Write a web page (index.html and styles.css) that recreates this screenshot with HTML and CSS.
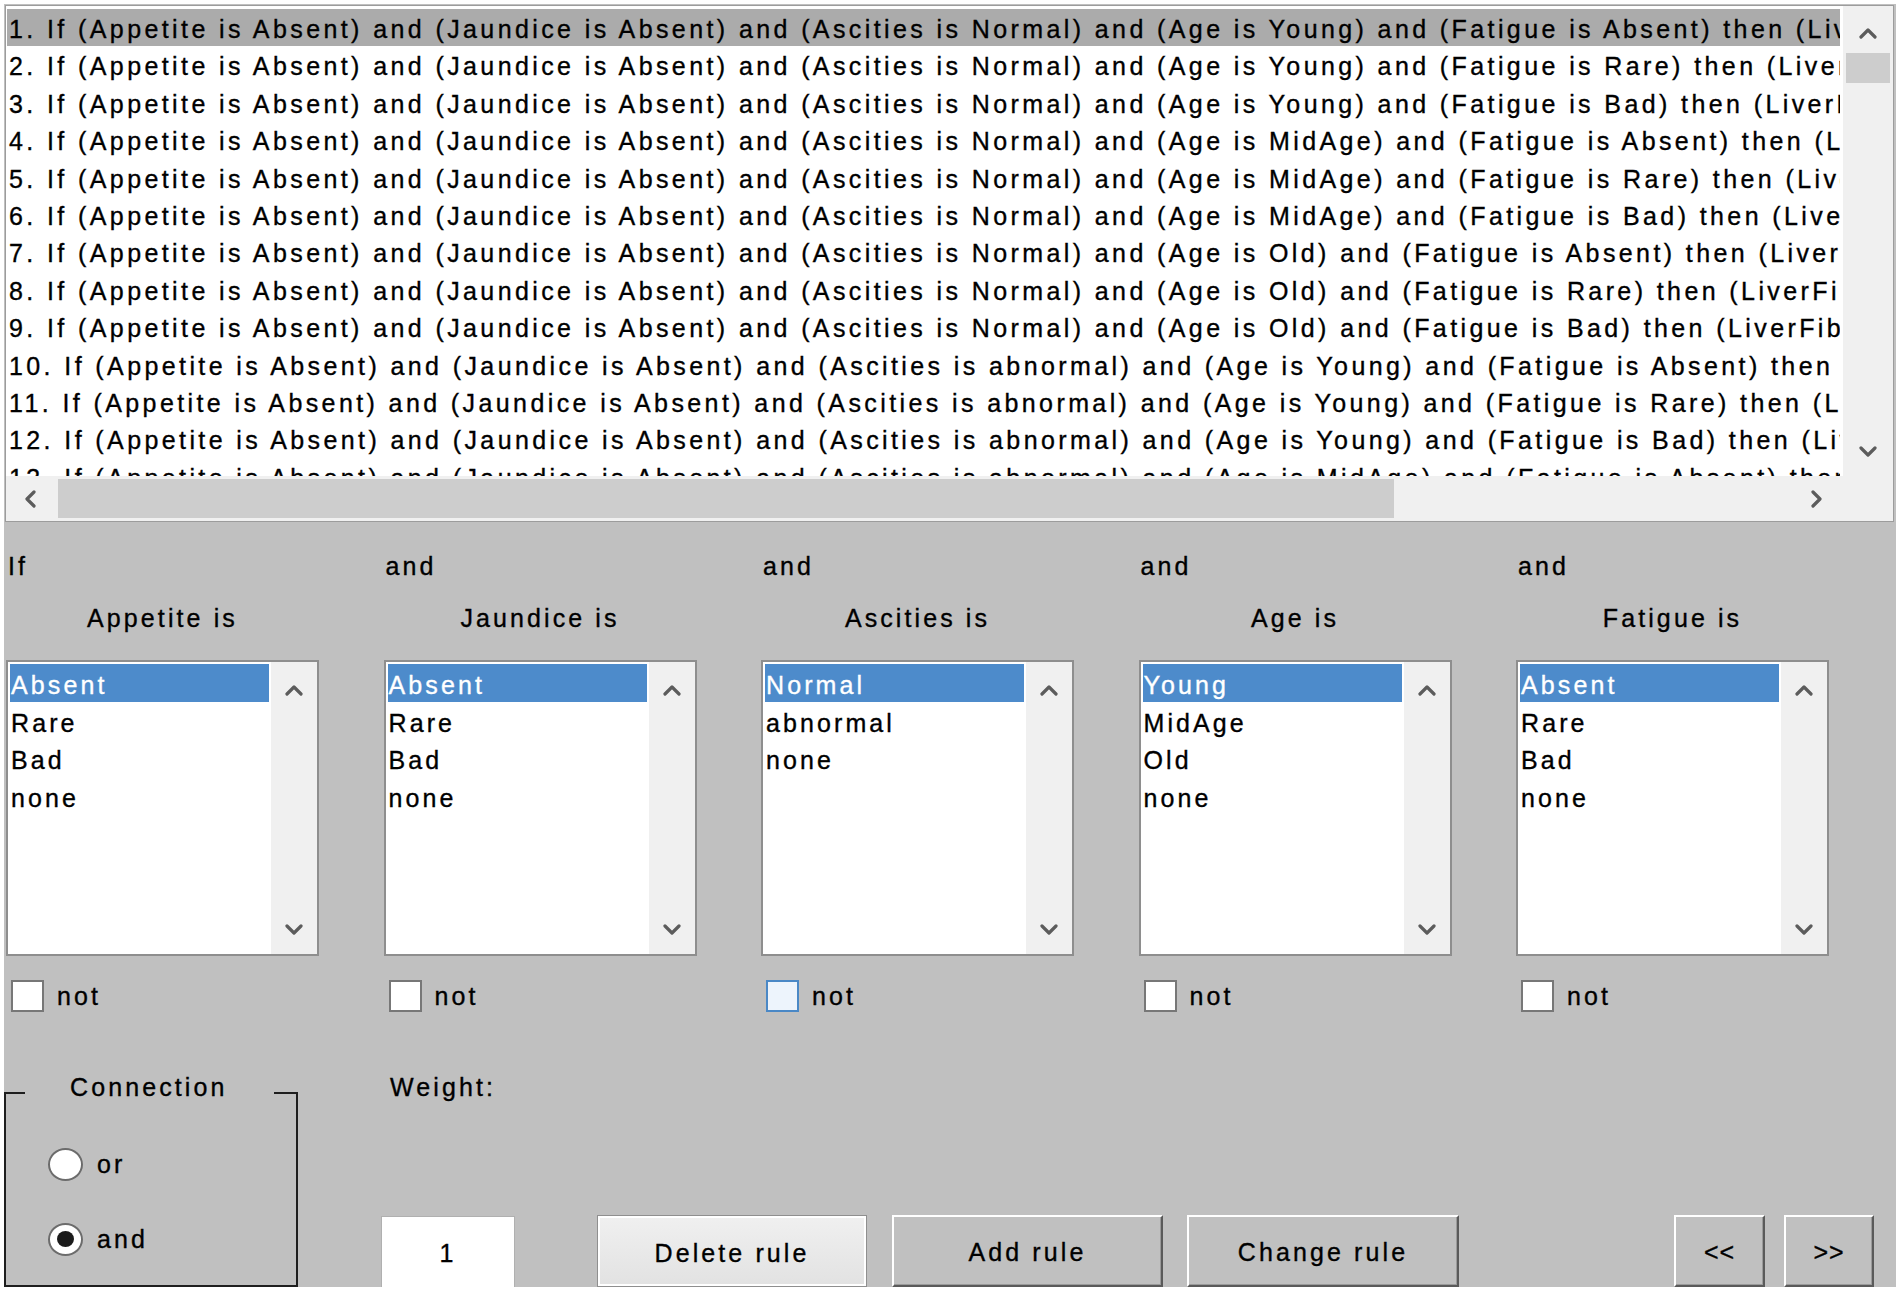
FILE: index.html
```html
<!DOCTYPE html>
<html>
<head>
<meta charset="utf-8">
<title>Rule Editor</title>
<link rel="stylesheet" href="styles.css">
</head>
<body>
<div class="window">
  <div class="rules">
    <div class="rules-body">
      <div class="rule sel">1. If (Appetite is Absent) and (Jaundice is Absent) and (Ascities is Normal) and (Age is Young) and (Fatigue is Absent) then (LiverFibrosis is F0) (1)</div>
      <div class="rule">2. If (Appetite is Absent) and (Jaundice is Absent) and (Ascities is Normal) and (Age is Young) and (Fatigue is Rare) then (LiverFibrosis is F0) (1)</div>
      <div class="rule">3. If (Appetite is Absent) and (Jaundice is Absent) and (Ascities is Normal) and (Age is Young) and (Fatigue is Bad) then (LiverFibrosis is F1) (1)</div>
      <div class="rule">4. If (Appetite is Absent) and (Jaundice is Absent) and (Ascities is Normal) and (Age is MidAge) and (Fatigue is Absent) then (LiverFibrosis is F0) (1)</div>
      <div class="rule">5. If (Appetite is Absent) and (Jaundice is Absent) and (Ascities is Normal) and (Age is MidAge) and (Fatigue is Rare) then (LiverFibrosis is F1) (1)</div>
      <div class="rule">6. If (Appetite is Absent) and (Jaundice is Absent) and (Ascities is Normal) and (Age is MidAge) and (Fatigue is Bad) then (LiverFibrosis is F1) (1)</div>
      <div class="rule">7. If (Appetite is Absent) and (Jaundice is Absent) and (Ascities is Normal) and (Age is Old) and (Fatigue is Absent) then (LiverFibrosis is F1) (1)</div>
      <div class="rule">8. If (Appetite is Absent) and (Jaundice is Absent) and (Ascities is Normal) and (Age is Old) and (Fatigue is Rare) then (LiverFibrosis is F1) (1)</div>
      <div class="rule">9. If (Appetite is Absent) and (Jaundice is Absent) and (Ascities is Normal) and (Age is Old) and (Fatigue is Bad) then (LiverFibrosis is F2) (1)</div>
      <div class="rule">10. If (Appetite is Absent) and (Jaundice is Absent) and (Ascities is abnormal) and (Age is Young) and (Fatigue is Absent) then (LiverFibrosis is F1) (1)</div>
      <div class="rule">11. If (Appetite is Absent) and (Jaundice is Absent) and (Ascities is abnormal) and (Age is Young) and (Fatigue is Rare) then (LiverFibrosis is F1) (1)</div>
      <div class="rule">12. If (Appetite is Absent) and (Jaundice is Absent) and (Ascities is abnormal) and (Age is Young) and (Fatigue is Bad) then (LiverFibrosis is F2) (1)</div>
      <div class="rule">13. If (Appetite is Absent) and (Jaundice is Absent) and (Ascities is abnormal) and (Age is MidAge) and (Fatigue is Absent) then (LiverFibrosis is F1) (1)</div>
    </div>
    <div class="vscroll">
      <svg class="arr arr-up" viewBox="0 0 18 12" width="18" height="12"><polyline points="2,10 9,3 16,10" /></svg>
      <div class="vthumb"></div>
      <svg class="arr arr-down" viewBox="0 0 18 12" width="18" height="12"><polyline points="2,2 9,9 16,2" /></svg>
    </div>
    <div class="hscroll">
      <svg class="arr arr-left" viewBox="0 0 12 18" width="12" height="18"><polyline points="10,2 3,9 10,16" /></svg>
      <div class="hthumb"></div>
      <svg class="arr arr-right" viewBox="0 0 12 18" width="12" height="18"><polyline points="2,2 9,9 2,16" /></svg>
    </div>
    <div class="corner"></div>
  </div>

  <div class="antecedents">
    <div class="col">
      <div class="conn">If</div>
      <div class="var">Appetite is</div>
      <div class="listbox">
        <div class="items">
          <div class="item sel">Absent</div>
          <div class="item">Rare</div>
          <div class="item">Bad</div>
          <div class="item">none</div>
        </div>
        <div class="lscroll">
          <svg class="arr arr-up" viewBox="0 0 18 12" width="18" height="12"><polyline points="2,10 9,3 16,10" /></svg>
          <svg class="arr arr-down" viewBox="0 0 18 12" width="18" height="12"><polyline points="2,2 9,9 16,2" /></svg>
        </div>
      </div>
      <div class="check"><span class="box"></span><span class="check-label">not</span></div>
    </div>

    <div class="col">
      <div class="conn">and</div>
      <div class="var">Jaundice is</div>
      <div class="listbox">
        <div class="items">
          <div class="item sel">Absent</div>
          <div class="item">Rare</div>
          <div class="item">Bad</div>
          <div class="item">none</div>
        </div>
        <div class="lscroll">
          <svg class="arr arr-up" viewBox="0 0 18 12" width="18" height="12"><polyline points="2,10 9,3 16,10" /></svg>
          <svg class="arr arr-down" viewBox="0 0 18 12" width="18" height="12"><polyline points="2,2 9,9 16,2" /></svg>
        </div>
      </div>
      <div class="check"><span class="box"></span><span class="check-label">not</span></div>
    </div>

    <div class="col">
      <div class="conn">and</div>
      <div class="var">Ascities is</div>
      <div class="listbox">
        <div class="items">
          <div class="item sel">Normal</div>
          <div class="item">abnormal</div>
          <div class="item">none</div>
        </div>
        <div class="lscroll">
          <svg class="arr arr-up" viewBox="0 0 18 12" width="18" height="12"><polyline points="2,10 9,3 16,10" /></svg>
          <svg class="arr arr-down" viewBox="0 0 18 12" width="18" height="12"><polyline points="2,2 9,9 16,2" /></svg>
        </div>
      </div>
      <div class="check"><span class="box box-focus"></span><span class="check-label">not</span></div>
    </div>

    <div class="col">
      <div class="conn">and</div>
      <div class="var">Age is</div>
      <div class="listbox">
        <div class="items">
          <div class="item sel">Young</div>
          <div class="item">MidAge</div>
          <div class="item">Old</div>
          <div class="item">none</div>
        </div>
        <div class="lscroll">
          <svg class="arr arr-up" viewBox="0 0 18 12" width="18" height="12"><polyline points="2,10 9,3 16,10" /></svg>
          <svg class="arr arr-down" viewBox="0 0 18 12" width="18" height="12"><polyline points="2,2 9,9 16,2" /></svg>
        </div>
      </div>
      <div class="check"><span class="box"></span><span class="check-label">not</span></div>
    </div>

    <div class="col">
      <div class="conn">and</div>
      <div class="var">Fatigue is</div>
      <div class="listbox">
        <div class="items">
          <div class="item sel">Absent</div>
          <div class="item">Rare</div>
          <div class="item">Bad</div>
          <div class="item">none</div>
        </div>
        <div class="lscroll">
          <svg class="arr arr-up" viewBox="0 0 18 12" width="18" height="12"><polyline points="2,10 9,3 16,10" /></svg>
          <svg class="arr arr-down" viewBox="0 0 18 12" width="18" height="12"><polyline points="2,2 9,9 16,2" /></svg>
        </div>
      </div>
      <div class="check"><span class="box"></span><span class="check-label">not</span></div>
    </div>
  </div>

  <div class="bottom">
    <fieldset class="group">
      <legend>Connection</legend>
      <div class="radio-row first"><span class="radio"></span><span>or</span></div>
      <div class="radio-row"><span class="radio radio-on"></span><span>and</span></div>
    </fieldset>
    <div class="actions">
      <div class="weight-label">Weight:</div>
      <div class="button-row">
        <div class="edit">1</div>
        <div class="btn btn-focus btn-delete">Delete rule</div>
        <div class="btn btn-add">Add rule</div>
        <div class="btn btn-change">Change rule</div>
        <div class="btn btn-prev">&lt;&lt;</div>
        <div class="btn btn-next">&gt;&gt;</div>
      </div>
    </div>
  </div>
</div>
</body>
</html>
```

FILE: styles.css
```css
html, body {
  margin: 0;
  padding: 0;
  background: #ffffff;
}

body {
  font-family: "Liberation Sans", Arial, sans-serif;
  font-size: 25px;
  letter-spacing: 3.1px;
  color: #000;
  -webkit-text-stroke: 0.35px currentColor;
}

.window {
  width: 1892px;
  height: 1283px;
  margin: 4px 0 0 4px;
  background: #c0c0c0;
  display: flex;
  flex-direction: column;
  box-sizing: border-box;
}

/* ---------- rules list ---------- */
.rules {
  margin: 1px 0 0 1px;
  width: 1889px;
  height: 517px;
  box-sizing: border-box;
  border: 1px solid #9c9c9c;
  background: #fff;
  display: grid;
  grid-template-columns: 1fr 50px;
  grid-template-rows: 1fr 45px;
  flex: none;
}

.rules-body {
  overflow: hidden;
  padding-top: 3px;
  min-width: 0;
}

.rule {
  white-space: nowrap;
  overflow: hidden;
  box-sizing: border-box;
  height: 37.4px;
  padding-top: 4px;
  line-height: 33.4px;
  margin: 0 3px 0 1px;
  padding-left: 2px;
  letter-spacing: 3.4px;
}

.rule.sel {
  background: #ababab;
}

.arr polyline {
  fill: none;
  stroke: #5c5c5c;
  stroke-width: 3.2;
  stroke-linecap: round;
  stroke-linejoin: round;
}

.vscroll {
  background: #f0f0f0;
  display: flex;
  flex-direction: column;
  align-items: center;
}

.vscroll .arr-up {
  margin-top: 21px;
  flex: none;
}

.vthumb {
  margin-top: 14px;
  width: 44px;
  height: 30px;
  background: #cdcdcd;
  flex: none;
}

.vscroll .arr-down {
  margin-top: auto;
  margin-bottom: 18px;
  flex: none;
}

.hscroll {
  background: #f0f0f0;
  display: flex;
  align-items: center;
}

.hscroll .arr-left {
  margin-left: 18px;
  flex: none;
}

.hthumb {
  margin-left: 22px;
  width: 1336px;
  align-self: stretch;
  margin-top: 3px;
  margin-bottom: 3px;
  background: #cdcdcd;
  flex: none;
}

.hscroll .arr-right {
  margin-left: auto;
  margin-right: 20px;
  flex: none;
}

.corner {
  background: #f0f0f0;
}

/* ---------- antecedent columns ---------- */
.antecedents {
  display: grid;
  grid-template-columns: repeat(5, 313px);
  column-gap: 64.5px;
  margin: 29px 0 0 2px;
  flex: none;
}

.col {
  display: flex;
  flex-direction: column;
}

.conn {
  line-height: 30px;
  height: 30px;
  padding-left: 2px;
}

.var {
  margin-top: 22px;
  line-height: 30px;
  height: 30px;
  text-align: center;
}

.listbox {
  margin-top: 27px;
  height: 296px;
  box-sizing: border-box;
  border: 2px solid #8e8e8e;
  background: #fff;
  display: grid;
  grid-template-columns: 1fr 46px;
}

.items {
  padding: 2px 2px 0 2px;
  min-width: 0;
}

.item {
  box-sizing: border-box;
  height: 37.5px;
  padding-top: 5px;
  line-height: 32.5px;
  padding-left: 1px;
  white-space: nowrap;
}

.item.sel {
  background: #4d8bcb;
  color: #fff;
}

.lscroll {
  background: #f0f0f0;
  display: flex;
  flex-direction: column;
  align-items: center;
}

.lscroll .arr-up {
  margin-top: 22px;
}

.lscroll .arr-down {
  margin-top: auto;
  margin-bottom: 18px;
}

.check {
  margin-top: 24px;
  height: 32px;
  display: flex;
  align-items: center;
}

.box {
  margin-left: 5px;
  width: 33px;
  height: 32px;
  box-sizing: border-box;
  border: 2px solid #777;
  background: #fff;
  flex: none;
}

.box-focus {
  border-color: #4a88c6;
  background: #edf4fc;
}

.check-label {
  margin-left: 13px;
  line-height: 32px;
}

/* ---------- bottom area ---------- */
.bottom {
  margin-top: auto;
  height: 215px;
  display: flex;
  flex: none;
}

.group {
  margin: 0;
  padding: 0;
  width: 294px;
  height: 215px;
  box-sizing: border-box;
  border: 2px solid #1e1e1e;
  min-width: 0;
  flex: none;
}

.group legend {
  margin-left: 19px;
  padding: 0 47px 12px 45px;
  line-height: 30px;
}

.radio-row {
  display: flex;
  align-items: center;
  height: 34px;
  margin-left: 42px;
  margin-top: 41px;
}

.radio-row.first {
  margin-top: 33px;
}

.radio {
  width: 35px;
  height: 33px;
  box-sizing: border-box;
  border-radius: 50%;
  border: 2px solid #6c6c6c;
  background: #fff;
  margin-right: 14px;
  display: flex;
  align-items: center;
  justify-content: center;
  flex: none;
}

.radio-on::after {
  content: "";
  width: 17px;
  height: 16px;
  border-radius: 50%;
  background: #1b1b1b;
}

.actions {
  flex: 1;
  display: flex;
  flex-direction: column;
}

.weight-label {
  padding-left: 92px;
  line-height: 30px;
  height: 30px;
}

.button-row {
  margin-top: auto;
  height: 72px;
  display: flex;
}

.edit {
  margin-left: 83px;
  width: 134px;
  height: 71px;
  align-self: flex-end;
  box-sizing: border-box;
  border: 1px solid #b0b0b0;
  border-bottom: none;
  background: #fff;
  text-align: center;
  line-height: 72px;
  flex: none;
}

.btn {
  height: 72px;
  box-sizing: border-box;
  background: #c0c0c0;
  border: 2px solid;
  border-color: #ffffff #5a5a5a #5a5a5a #ffffff;
  box-shadow: inset -1px -1px 0 #9a9a9a;
  text-align: center;
  line-height: 70px;
  flex: none;
}

.btn-focus {
  background: linear-gradient(#f0f0f0, #e2e2e2);
  border: 1px solid #8f8f8f;
  box-shadow: inset 0 0 0 2px #ffffff;
  line-height: 74px;
}

.btn-delete {
  margin-left: 82px;
  width: 270px;
}

.btn-add {
  margin-left: 25px;
  width: 271px;
}

.btn-change {
  margin-left: 24px;
  width: 272px;
}

.btn-prev {
  margin-left: 215px;
  width: 91px;
  letter-spacing: 1px;
}

.btn-next {
  margin-left: 19px;
  width: 90px;
  letter-spacing: 1px;
}
```
